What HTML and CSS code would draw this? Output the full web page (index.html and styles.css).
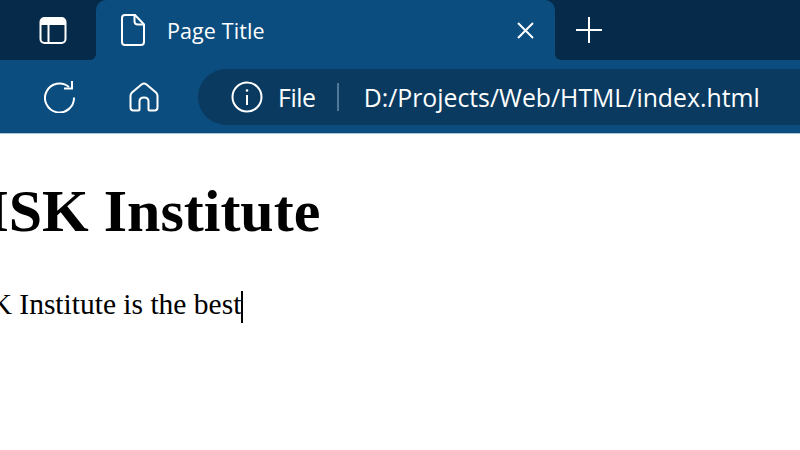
FILE: index.html
```html
<!DOCTYPE html>
<html lang="en">

<head>
    <meta charset="UTF-8">
    <title>Page Title</title>
    <link rel="stylesheet" href="styles.css">
</head>

<body>
    <header class="browser">
        <div class="tabstrip">
            <div class="strip-left">
                <svg class="icon-tabs" width="28" height="28" viewBox="0 0 28 28" fill="none" stroke="#fff" stroke-width="2">
                    <rect x="1.5" y="2" width="25" height="25" rx="4"/>
                    <path d="M2 3.5 Q2 2 5 2 H23 Q26 2 26 4 V9 H2 Z" fill="#fff" stroke="none"/>
                    <path d="M9.5 9 V26"/>
                </svg>
            </div>
            <div class="tab">
                <svg class="icon-page" width="24" height="32" viewBox="0 0 24 32" fill="none" stroke="#fff" stroke-width="2">
                    <path d="M4 1 H14 L23 10.5 V28 Q23 31 20 31 H4 Q1 31 1 28 V4 Q1 1 4 1 Z"/>
                    <path d="M13.5 1.5 V7 Q13.5 10.5 17 10.5 H22.5"/>
                </svg>
                <span class="tab-title">Page Title</span>
                <svg class="icon-close" width="17" height="17" viewBox="0 0 17 17" stroke="#fff" stroke-width="2">
                    <path d="M1 1 L16 16 M16 1 L1 16"/>
                </svg>
            </div>
            <div class="strip-right">
                <svg class="icon-plus" width="28" height="28" viewBox="0 0 28 28" stroke="#fff" stroke-width="2">
                    <path d="M14 1 V27 M1 14 H27"/>
                </svg>
            </div>
        </div>
        <div class="toolbar">
            <svg class="icon-reload" width="32" height="32" viewBox="0 0 32 32" fill="none" stroke="#fff" stroke-width="2">
                <path d="M25 6 A14.5 14.5 0 1 0 30 16.5"/>
                <path d="M28 0 V7.5 H20"/>
            </svg>
            <svg class="icon-home" width="30" height="30" viewBox="0 0 30 30" fill="none" stroke="#fff" stroke-width="2">
                <path d="M12.5 2.5 Q15 0.5 17.5 2.5 L27 10.5 Q28.5 12 28.5 14 V25.5 Q28.5 28.5 25.5 28.5 H20.5 Q19.5 28.5 19.5 27.5 V19.5 Q19.5 15.5 15 15.5 Q10.5 15.5 10.5 19.5 V27.5 Q10.5 28.5 9.5 28.5 H4.5 Q1.5 28.5 1.5 25.5 V14 Q1.5 12 3 10.5 Z"/>
            </svg>
            <div class="address">
                <svg class="icon-info" width="32" height="32" viewBox="0 0 32 32" fill="none" stroke="#fff" stroke-width="2">
                    <circle cx="16" cy="16" r="14.5"/>
                    <path d="M16 14 V24"/>
                    <circle cx="16" cy="9.5" r="1.3" fill="#fff" stroke="none"/>
                </svg>
                <span class="scheme">File</span>
                <span class="divider"></span>
                <span class="url">D:/Projects/Web/HTML/index.html</span>
            </div>
        </div>
    </header>

    <main class="page">
        <h1>MSK Institute</h1>
        <p>MSK Institute is the best<span class="caret"></span></p>
    </main>
</body>

</html>
```

FILE: styles.css
```css
html, body {
    margin: 0;
    padding: 0;
    height: 100%;
    overflow: hidden;
    background-color: #fff;
}

.browser {
    font-family: 'Open Sans', 'Noto Sans', sans-serif;
    color: #fff;
    background-color: #0b4d7f;
    border-bottom: 1px solid #a9c3d6;
    height: 134px;
    box-sizing: border-box;
}

.tabstrip {
    display: flex;
    height: 60px;
    background: linear-gradient(#062b4a 50%, #0b4d7f 50%);
}

.strip-left,
.strip-right {
    background-color: #062b4a;
    display: flex;
    align-items: center;
    height: 60px;
    box-sizing: border-box;
}

.strip-left {
    width: 96px;
    padding-left: 39px;
    border-bottom-right-radius: 6px;
}

.strip-right {
    flex: 1;
    padding-left: 20px;
    border-bottom-left-radius: 6px;
}

.tab {
    width: 459px;
    height: 60px;
    display: flex;
    align-items: center;
    padding: 0 21px 0 25px;
    box-sizing: border-box;
    background-color: #0b4d7f;
    border-radius: 10px 10px 0 0;
}

.tab-title {
    flex: 1;
    margin-left: 22px;
    font-size: 21.5px;
    letter-spacing: 0.1px;
}

.toolbar {
    display: flex;
    align-items: center;
    height: 73px;
    padding: 1px 0 0 44px;
    box-sizing: border-box;
}

.icon-home {
    margin-left: 53px;
}

.address {
    display: flex;
    align-items: center;
    flex: 1;
    height: 56px;
    margin-left: 39px;
    padding-left: 33px;
    background-color: #0a3a60;
    border-radius: 28px 0 0 28px;
    font-size: 24.8px;
}

.scheme {
    margin-left: 15px;
    letter-spacing: -0.4px;
}

.divider {
    width: 2px;
    height: 28px;
    margin: 0 25px 0 21px;
    background-color: #4f7899;
}

.page {
    font-family: 'Liberation Serif', serif;
    color: #000;
}

h1 {
    margin: 43px 0 0 -48px;
    font-size: 60px;
    line-height: 69px;
}

p {
    margin: 41px 0 0 -52px;
    font-size: 29.5px;
    line-height: 34px;
}

.caret {
    display: inline-block;
    width: 2px;
    height: 32px;
    background-color: #000;
    vertical-align: -9px;
}
```
